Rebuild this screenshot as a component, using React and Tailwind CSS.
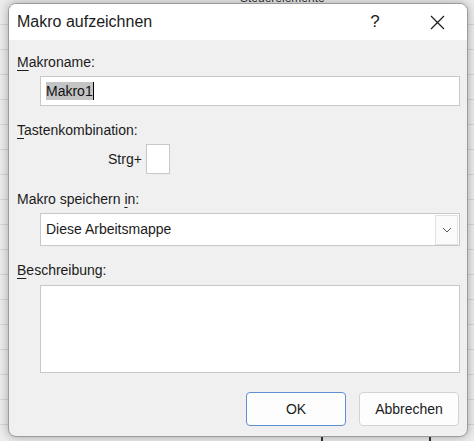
import React from 'react';

const font = { fontFamily: '"Liberation Sans", Arial, sans-serif' };

const Label = ({ pre = '', hot, post, className = '' }) => (
  <div className={`h-[20px] leading-[20px] text-[14px] text-[#1b1b1b] ${className}`}>
    {pre}
    <u className="underline underline-offset-[3px]">{hot}</u>
    {post}
  </div>
);

const MacroDialog = () => {
  return (
    <div className="relative w-[460px] h-[434px] rounded-lg border border-[#9c9c9c] bg-[#f0f0f0] shadow-[0_0_10px_rgba(0,0,0,0.3)] overflow-hidden flex flex-col">
      {/* title bar */}
      <div className="h-[36px] bg-white flex items-center pl-[8px] shrink-0">
        <span className="text-[16px] text-[#1b1b1b] flex-1">Makro aufzeichnen</span>
        <span className="w-[20px] text-center text-[17px] text-[#1b1b1b] mr-[45px]">?</span>
        <svg width="15" height="15" viewBox="0 0 15 15" className="mr-[22px]">
          <path d="M1 1 L14 14 M14 1 L1 14" stroke="#1b1b1b" strokeWidth="1.2" fill="none" />
        </svg>
      </div>

      {/* body */}
      <div className="flex flex-col pl-[8px] pr-[7px]">
        <Label hot="M" post="akroname:" className="mt-[12px]" />
        <div className="ml-[23px] mt-[4px] h-[30px] bg-white border border-[#c8c8c8] flex items-center pl-[5px]">
          <span className="h-[18px] leading-[18px] text-[14px] bg-[#c4c4c4] text-[#111]">Makro1</span>
          <span className="w-px h-[18px] bg-black" />
        </div>

        <Label hot="T" post="astenkombination:" className="mt-[14px]" />
        <div className="mt-[4px] flex items-center">
          <span className="ml-[91px] text-[14px] text-[#1b1b1b]">Strg+</span>
          <div className="ml-[4px] w-[24px] h-[30px] bg-white border border-[#c8c8c8]" />
        </div>

        <Label pre="Makro speichern " hot="i" post="n:" className="mt-[15px]" />
        <div className="ml-[23px] mt-[4px] h-[33px] bg-white border border-[#c8c8c8] flex items-center pl-[5px]">
          <span className="flex-1 text-[14px] text-[#1b1b1b]">Diese Arbeitsmappe</span>
          <div className="w-[23px] h-[30px] mr-px border border-[#e2e2e2] bg-[#fbfbfb] flex items-center justify-center">
            <svg width="10" height="6" viewBox="0 0 10 6">
              <path d="M1 1 L5 5 L9 1" stroke="#555" strokeWidth="1" fill="none" />
            </svg>
          </div>
        </div>

        <Label hot="B" post="eschreibung:" className="mt-[14px]" />
        <div className="ml-[23px] mt-[5px] h-[88px] bg-white border border-[#c8c8c8]" />

        <div className="mt-[19px] flex justify-end gap-[13px] pr-px">
          <button className="w-[100px] h-[34px] rounded-[4px] border border-[#5f8fd3] bg-[#fdfdfd] text-[14px] text-[#1b1b1b]">
            OK
          </button>
          <button className="w-[100px] h-[34px] rounded-[4px] border border-[#d3d3d3] bg-[#fdfdfd] text-[14px] text-[#1b1b1b]">
            Abbrechen
          </button>
        </div>
      </div>
    </div>
  );
};

export default function App() {
  return (
    <div
      style={font}
      className="relative w-[474px] h-[441px] overflow-hidden bg-[#ececec] bg-[repeating-linear-gradient(to_bottom,transparent_0px,transparent_24px,#d6d6d6_24px,#d6d6d6_25px)] pt-[3px] pl-[8px]"
    >
      {/* ribbon group label peeking out above the dialog */}
      <span className="absolute left-[240px] top-[-11px] text-[12px] text-[#333]">Steuerelemente</span>
      {/* sheet lines below the dialog */}
      <span className="absolute left-[321px] top-[436px] w-[2px] h-[6px] bg-[#333]" />
      <span className="absolute left-[429px] top-[436px] w-[2px] h-[6px] bg-[#333]" />
      <MacroDialog />
    </div>
  );
}
